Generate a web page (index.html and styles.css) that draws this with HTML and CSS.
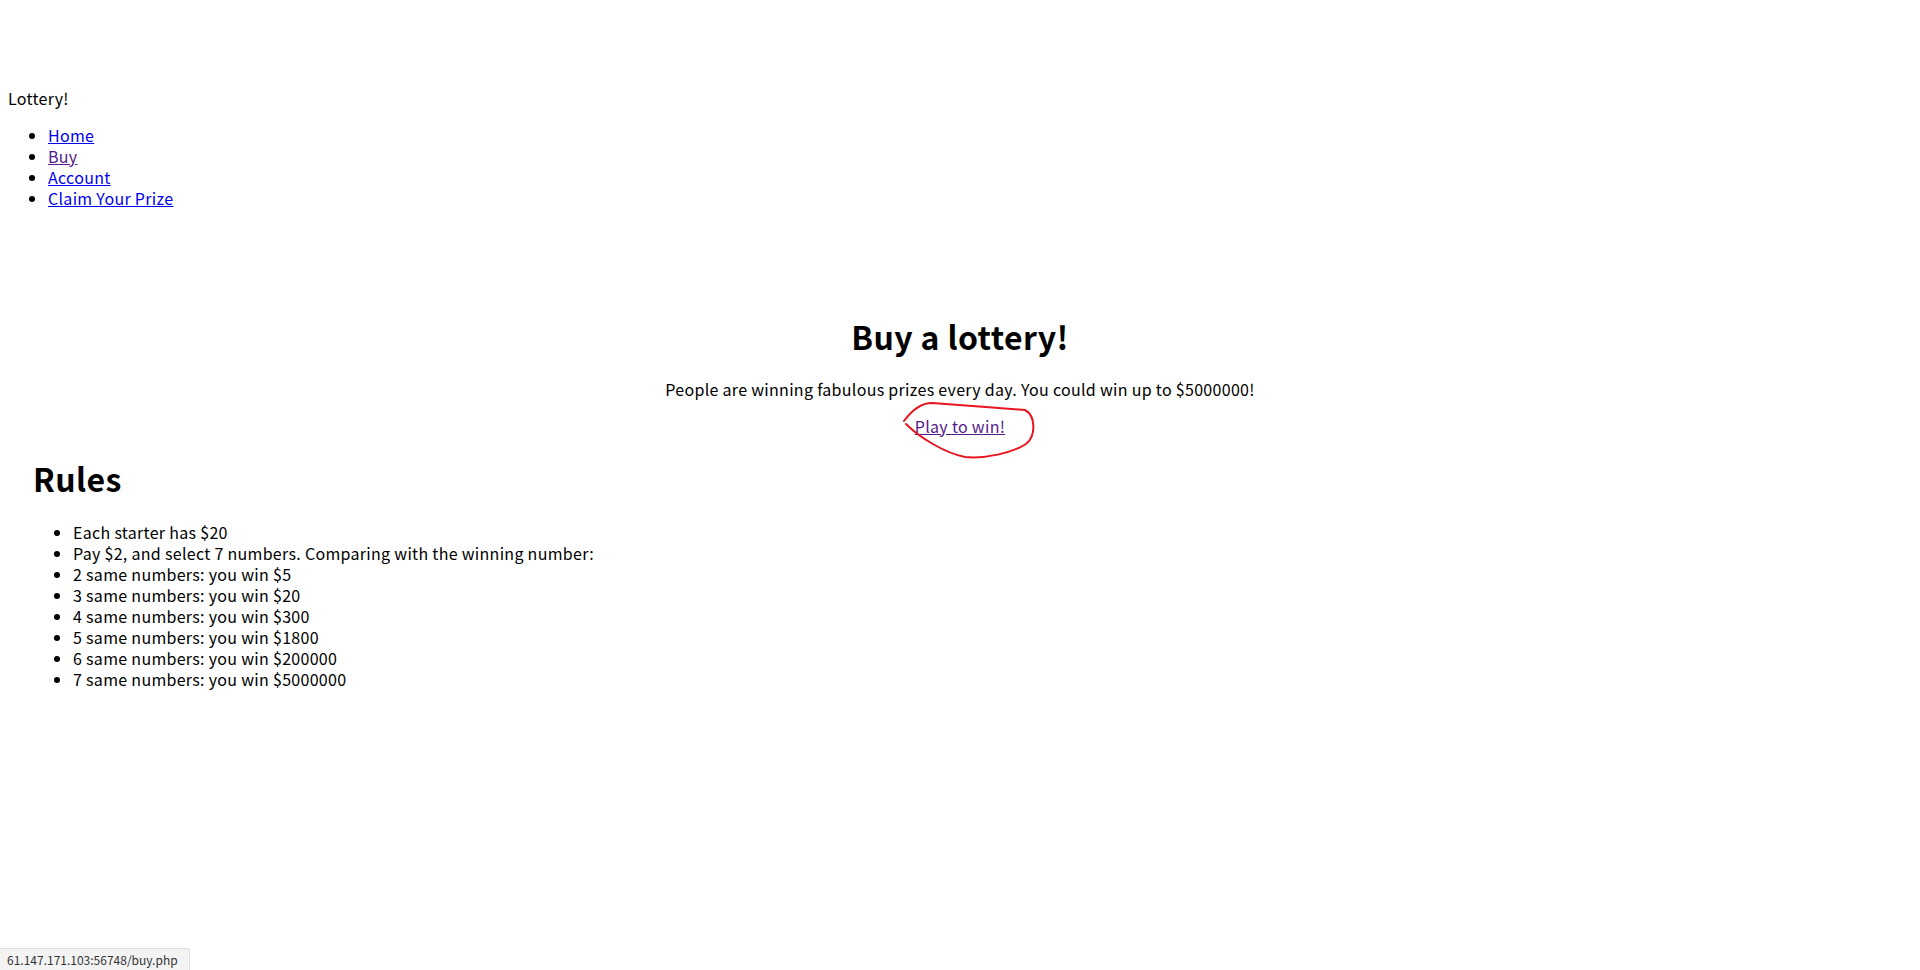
FILE: index.html
```html
<!DOCTYPE html>
<html lang="en">
<head>
  <meta charset="UTF-8">
  <title>Buy a lottery</title>
  <link rel="stylesheet" href="styles.css">
</head>
<body>
  <div class="header">
    <div class="brand">Lottery!</div>
    <ul class="nav">
      <li><a href="#home">Home</a></li>
      <li><a class="visited" href="#buy">Buy</a></li>
      <li><a href="#account">Account</a></li>
      <li><a href="#claim">Claim Your Prize</a></li>
    </ul>
  </div>

  <div class="hero">
    <h1>Buy a lottery!</h1>
    <p>People are winning fabulous prizes every day. You could win up to $5000000!</p>
    <p><a class="visited" href="#play">Play to win!</a></p>
  </div>

  <div class="rules">
    <h1>Rules</h1>
    <ul>
      <li>Each starter has $20</li>
      <li>Pay $2, and select 7 numbers. Comparing with the winning number:</li>
      <li>2 same numbers: you win $5</li>
      <li>3 same numbers: you win $20</li>
      <li>4 same numbers: you win $300</li>
      <li>5 same numbers: you win $1800</li>
      <li>6 same numbers: you win $200000</li>
      <li>7 same numbers: you win $5000000</li>
    </ul>
  </div>

  <!-- hand-drawn highlight on the screenshot -->
  <svg class="mark" width="1920" height="970" viewBox="0 0 1920 970">
    <path d="M904 421 C912 410, 922 403, 932 403 C960 405, 995 408, 1025 410 C1036 416, 1036 436, 1026 444 C1012 453, 985 459, 965 457 C945 453, 920 438, 906 424" fill="none" stroke="#e8141f" stroke-width="2" stroke-linecap="round"/>
  </svg>

  <div class="status">61.147.171.103:56748/buy.php</div>
</body>
</html>
```

FILE: styles.css
```css
body {
  margin: 8px;
  font-family: "Noto Sans CJK SC", "Noto Sans", sans-serif;
  font-size: 16px;
  line-height: 21px;
  letter-spacing: 0.3px;
  color: #000;
  background: #fff;
}
a { color: #0000ee; }
a.visited { color: #551a8b; }

.header {
  padding-top: 80px;
}
.nav {
  margin: 16px 0;
  padding-left: 40px;
}

.hero {
  padding-top: 69px;
  text-align: center;
}
h1 {
  font-size: 32px;
  line-height: 42px;
  font-weight: bold;
  letter-spacing: 0.4px;
  margin: 21.44px 0;
}
p { margin: 16px 0; }

.rules {
  padding-left: 25px;
}
.rules h1 {
  margin: 20px 0 23.5px;
}
.rules ul {
  margin: 16px 0;
  padding-left: 40px;
}

.mark {
  position: absolute;
  left: 0;
  top: 0;
  pointer-events: none;
}

.status {
  position: fixed;
  left: 0;
  bottom: 0;
  padding: 2px 11px 2px 7px;
  font-size: 12px;
  line-height: 17px;
  letter-spacing: 0;
  color: #333;
  background: #f3f3f3;
  border-top: 1px solid #dedede;
  border-right: 1px solid #dedede;
  border-top-right-radius: 3px;
}
```
